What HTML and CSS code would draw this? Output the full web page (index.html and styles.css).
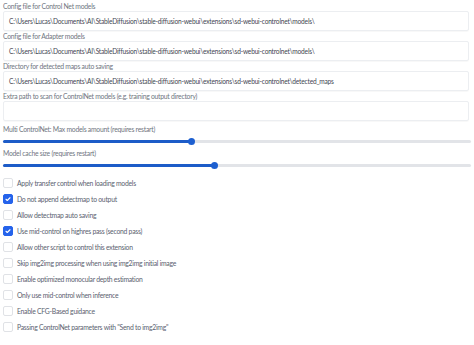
FILE: index.html
```html
<!DOCTYPE html>
<html>
<head>
<meta charset="utf-8">
<link rel="stylesheet" href="styles.css">
</head>
<body>
<div class="panel">
  <div class="field">
    <div class="label">Config file for Control Net models</div>
    <div class="box">C:\Users\Lucas\Documents\AI\StableDiffusion\stable-diffusion-webui\extensions\sd-webui-controlnet\models\</div>
  </div>
  <div class="field">
    <div class="label">Config file for Adapter models</div>
    <div class="box">C:\Users\Lucas\Documents\AI\StableDiffusion\stable-diffusion-webui\extensions\sd-webui-controlnet\models\</div>
  </div>
  <div class="field">
    <div class="label">Directory for detected maps auto saving</div>
    <div class="box">C:\Users\Lucas\Documents\AI\StableDiffusion\stable-diffusion-webui\extensions\sd-webui-controlnet\detected_maps</div>
  </div>
  <div class="field">
    <div class="label">Extra path to scan for ControlNet models (e.g. training output directory)</div>
    <div class="box"></div>
  </div>
  <div class="sliders">
    <div class="slider-field">
      <div class="label">Multi ControlNet: Max models amount (requires restart)</div>
      <div class="track"><div class="fill" style="width:40.4%"><span class="thumb"></span></div></div>
    </div>
    <div class="slider-field">
      <div class="label">Model cache size (requires restart)</div>
      <div class="track"><div class="fill" style="width:45.3%"><span class="thumb"></span></div></div>
    </div>
  </div>
  <div class="checks">
    <div class="check"><span class="cb"></span>Apply transfer control when loading models</div>
    <div class="check"><span class="cb on"></span>Do not append detectmap to output</div>
    <div class="check"><span class="cb"></span>Allow detectmap auto saving</div>
    <div class="check"><span class="cb on"></span>Use mid-control on highres pass (second pass)</div>
    <div class="check"><span class="cb"></span>Allow other script to control this extension</div>
    <div class="check"><span class="cb"></span>Skip img2img processing when using img2img initial image</div>
    <div class="check"><span class="cb"></span>Enable optimized monocular depth estimation</div>
    <div class="check"><span class="cb"></span>Only use mid-control when inference</div>
    <div class="check"><span class="cb"></span>Enable CFG-Based guidance</div>
    <div class="check"><span class="cb"></span>Passing ControlNet parameters with "Send to img2img"</div>
  </div>
</div>
</body>
</html>
```

FILE: styles.css
```css
html, body {
  margin: 0;
  padding: 0;
  background: #ffffff;
}
body {
  font-family: "Lato", "Liberation Sans", sans-serif;
  font-size: 6.8px;
  letter-spacing: -0.25px;
  color: #5b6270;
}
.panel {
  padding: 1px 3px 0 3px;
  display: flex;
  flex-direction: column;
}
.field {
  display: flex;
  flex-direction: column;
}
.label {
  height: 10px;
  line-height: 10px;
  color: #70767f;
  white-space: nowrap;
}
.box {
  height: 18px;
  line-height: 18px;
  border: 1px solid #eceef1;
  border-radius: 2px;
  padding: 0 5px;
  font-size: 6.6px;
  letter-spacing: -0.2px;
  color: #3f4652;
  white-space: nowrap;
  overflow: hidden;
  box-shadow: 0 1px 1px rgba(0,0,0,0.03);
  margin-right: 2px;
}
.sliders {
  display: flex;
  flex-direction: column;
  margin-top: 3px;
}
.slider-field {
  display: flex;
  flex-direction: column;
}
.track {
  height: 3px;
  margin: 6px 0 5px 0;
  background: #e2e4e8;
  border-radius: 2px;
}
.fill {
  position: relative;
  height: 100%;
  background: #1d5cc8;
  border-radius: 2px;
}
.thumb {
  position: absolute;
  right: -3px;
  top: -2px;
  width: 7px;
  height: 7px;
  border-radius: 50%;
  background: #1d5fd0;
}
.checks {
  display: flex;
  flex-direction: column;
  margin-top: 3px;
}
.check {
  height: 16px;
  display: flex;
  align-items: center;
  gap: 4px;
  color: #5b6270;
  white-space: nowrap;
}
.cb {
  width: 8px;
  height: 8px;
  border: 1px solid #e0e2e6;
  border-radius: 2px;
  box-sizing: content-box;
  flex: none;
  background: #fff;
}
.cb.on {
  background: #2563eb;
  border-color: #2563eb;
  background-image: url("data:image/svg+xml;utf8,<svg xmlns='http://www.w3.org/2000/svg' viewBox='0 0 16 16'><path d='M4 8.5l2.5 2.5L12 5.5' fill='none' stroke='white' stroke-width='2.2' stroke-linecap='round' stroke-linejoin='round'/></svg>");
  background-size: 100% 100%;
}
```
